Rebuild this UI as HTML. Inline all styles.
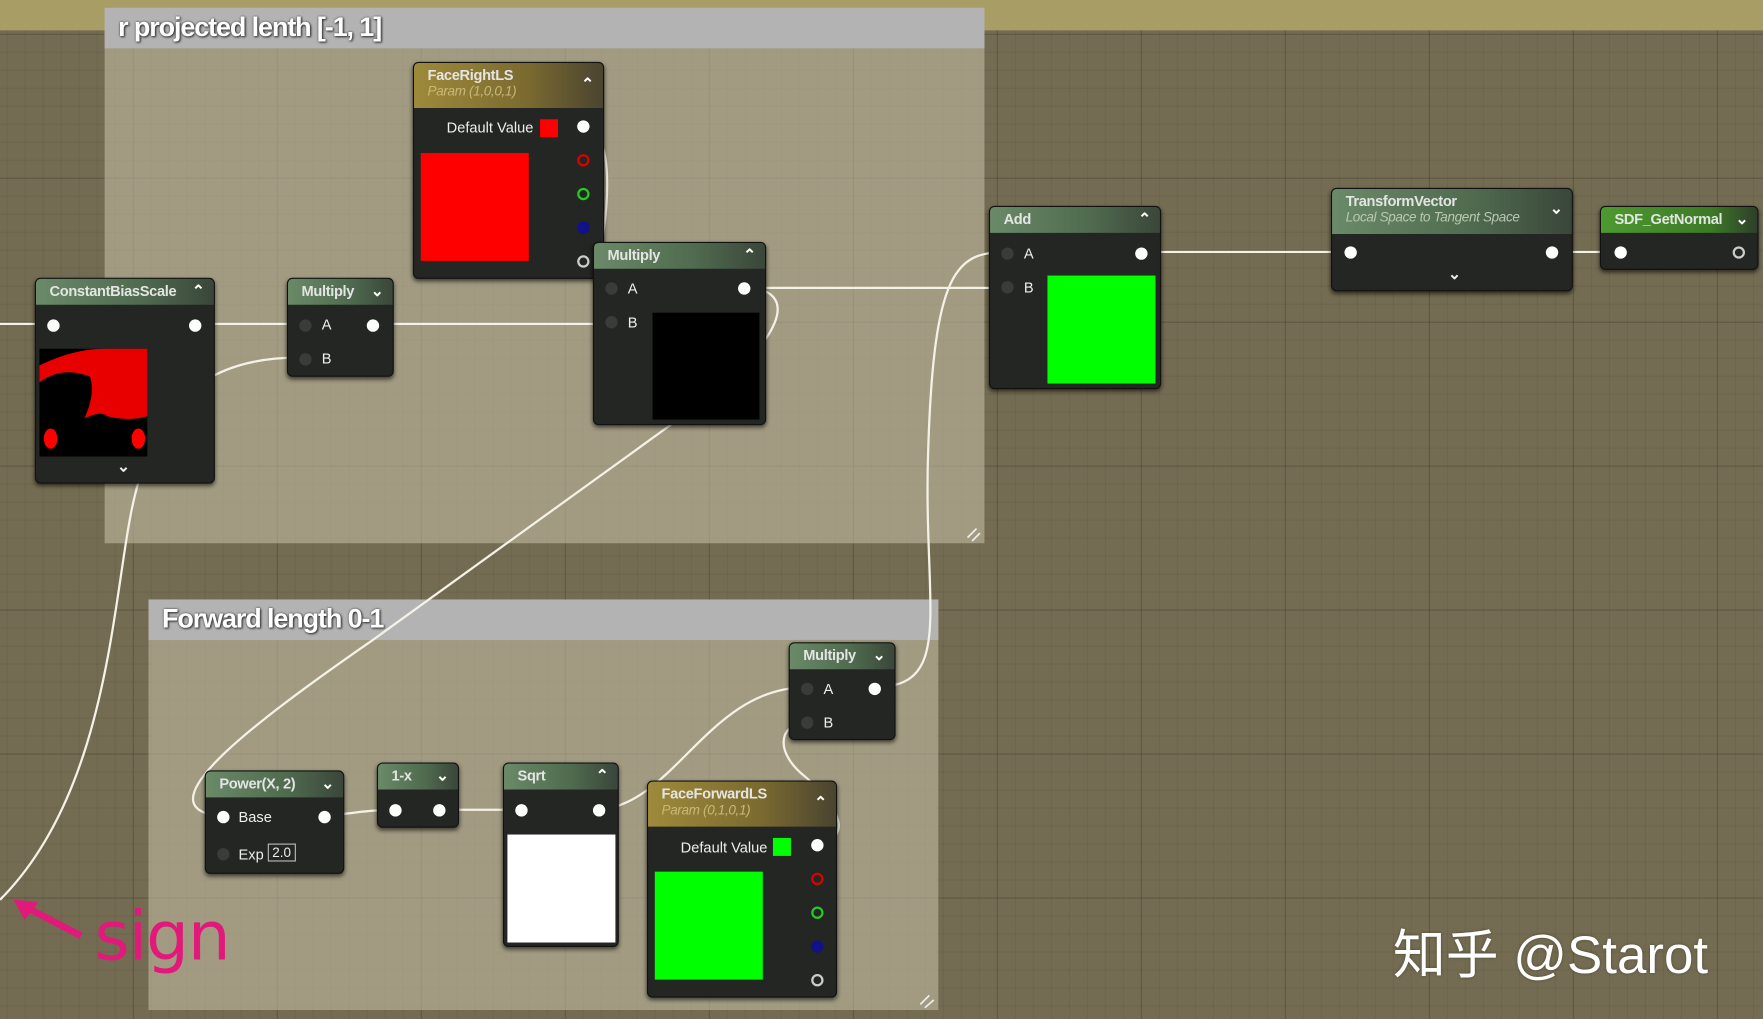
<!DOCTYPE html>
<html><head><meta charset="utf-8"><style>
*{margin:0;padding:0;box-sizing:border-box}
html,body{width:1763px;height:1019px;overflow:hidden;background:#6f6750}
#s{position:absolute;left:0;top:0;width:1567px;height:906px;transform-origin:0 0;transform:scale(1.12508,1.12472);
font-family:"Liberation Sans",sans-serif;
background-color:#746c52;
background-image:linear-gradient(rgba(0,0,0,.15) 1px,transparent 1px),linear-gradient(90deg,rgba(0,0,0,.15) 1px,transparent 1px),linear-gradient(rgba(0,0,0,.07) 1px,transparent 1px),linear-gradient(90deg,rgba(0,0,0,.07) 1px,transparent 1px);
background-size:128px 128px,128px 128px,16px 16px,16px 16px;background-position:-10px 30px}
.top{position:absolute;left:0;top:0;width:1567px;height:27px;background:#a99d66}
.cm{position:absolute;background:rgba(200,195,170,.55)}
.cm .h{height:36px;background:#b3b3b3;color:#fff;font-size:24px;font-weight:bold;padding:4px 12px;text-shadow:1px 1px 2px #333,0 0 2px #444;letter-spacing:-1px}
.n{position:absolute;background:#242623;border-radius:5px;box-shadow:0 2px 4px rgba(0,0,0,.6);border:1px solid #111;color:#ddd;font-size:13px}
.n .hd{height:23px;border-radius:4px 4px 0 0;background:linear-gradient(90deg,#6a8a68,#4f6a4e 60%,#3a463a);color:#e4e4e4;padding:3px 12px;font-size:13px;font-weight:bold;position:relative;letter-spacing:-.3px}
.n .hd.g{background:linear-gradient(90deg,#9e8a3a,#7b6a30 60%,#4a4430);height:40px}
.n .hd.b{background:linear-gradient(90deg,#4d9a30,#3c7a26 70%,#2e3e2a)}
.hd i{display:block;font-size:12px;color:#c9b878;font-style:italic;font-weight:normal}
.hd .c{position:absolute;right:8px;top:2px;font-size:14px;color:#fff;font-weight:bold}
.p{position:absolute;width:11px;height:11px;border-radius:50%;background:#fff}
.p.d{background:#3a3c39}
.p.o{background:none;border:2px solid #ccc}
.lb{position:absolute;font-size:13px;color:#eee}
.sq{position:absolute}
</style></head><body><div id="s">
<div class="top"></div>
<div class="cm" style="left:93px;top:7px;width:782px;height:476px"><div class="h">r projected lenth [-1, 1]</div></div>
<div class="cm" style="left:132px;top:533px;width:702px;height:365px"><div class="h">Forward length 0-1</div></div>

<svg width="1567" height="906" style="position:absolute;left:0;top:0" fill="none" stroke="#f4f1e6" stroke-width="2">
<path d="M0,288 H40 M185,288 H265 M340,288 H540 M665,256 H895 M1014,224 H1195 M1380,224 H1440"/>
<path d="M265,318 C180,318 140,360 120,440 C100,520 100,700 0,800"/>
<path d="M517,112 C550,112 540,200 530,240 C528,250 535,256 543,256"/>
<path d="M662,256 C710,256 705,300 600,375 L330,570 C200,660 130,720 198,726"/>
<path d="M777,611 C850,611 820,540 825,400 C830,240 850,224 895,224"/>
<path d="M288,726 C320,722 330,720 352,720 M390,720 H463 M532,720 C600,715 630,611 717,611"/>
<path d="M726,751 C760,745 745,715 715,690 C690,670 690,645 717,641"/>
<path d="M868,470 L860,478 M871,474 L864,481 M826,885 L818,893 M830,889 L822,896" stroke="#eee" stroke-width="1.5"/>
</svg>

<div class="n" style="left:31px;top:247px;width:160px;height:183px"><div class="hd">ConstantBiasScale<span class="c">⌃</span></div>
<div class="p" style="left:10px;top:36px"></div><div class="p" style="left:136px;top:36px"></div>
<svg class="sq" style="left:3px;top:62px" width="96" height="96"><rect width="96" height="96" fill="#000"/><path d="M0,15 Q30,0 60,0 H96 V60 Q80,65 60,60 Q55,55 40,62 Q50,40 45,25 Q20,15 0,30Z" fill="#e80000"/><ellipse cx="10" cy="80" rx="6" ry="9" fill="#f00"/><ellipse cx="88" cy="80" rx="6" ry="9" fill="#f00"/></svg>
<div class="lb" style="left:72px;top:158px;font-size:14px;font-weight:bold">⌄</div></div>

<div class="n" style="left:255px;top:247px;width:95px;height:88px"><div class="hd">Multiply<span class="c">⌄</span></div>
<div class="p d" style="left:10px;top:36px"></div><div class="lb" style="left:30px;top:33px">A</div><div class="p" style="left:70px;top:36px"></div>
<div class="p d" style="left:10px;top:66px"></div><div class="lb" style="left:30px;top:63px">B</div></div>

<div class="n" style="left:367px;top:55px;width:170px;height:193px"><div class="hd g">FaceRightLS<i>Param (1,0,0,1)</i><span class="c" style="top:10px">⌃</span></div>
<div class="lb" style="left:29px;top:50px">Default Value</div><div class="sq" style="left:112px;top:50px;width:16px;height:16px;background:#f00"></div>
<div class="sq" style="left:6px;top:80px;width:96px;height:96px;background:#f00"></div>
<div class="p" style="left:145px;top:51px"></div><div class="p o" style="left:145px;top:81px;border-color:#d00"></div><div class="p o" style="left:145px;top:111px;border-color:#2c2"></div><div class="p" style="left:145px;top:141px;background:#118"></div><div class="p o" style="left:145px;top:171px"></div></div>

<div class="n" style="left:527px;top:215px;width:154px;height:163px"><div class="hd">Multiply<span class="c">⌃</span></div>
<div class="p d" style="left:10px;top:35px"></div><div class="lb" style="left:30px;top:33px">A</div><div class="p" style="left:128px;top:35px"></div>
<div class="p d" style="left:10px;top:65px"></div><div class="lb" style="left:30px;top:63px">B</div>
<div class="sq" style="left:52px;top:62px;width:95px;height:95px;background:#000"></div></div>

<div class="n" style="left:879px;top:183px;width:153px;height:163px"><div class="hd">Add<span class="c">⌃</span></div>
<div class="p d" style="left:10px;top:36px"></div><div class="lb" style="left:30px;top:34px">A</div><div class="p" style="left:129px;top:36px"></div>
<div class="p d" style="left:10px;top:66px"></div><div class="lb" style="left:30px;top:64px">B</div>
<div class="sq" style="left:51px;top:61px;width:96px;height:96px;background:#0f0"></div></div>

<div class="n" style="left:1183px;top:167px;width:215px;height:92px"><div class="hd" style="height:40px">TransformVector<i style="color:#b8c8b0">Local Space to Tangent Space</i><span class="c" style="top:9px">⌄</span></div>
<div class="p" style="left:11px;top:51px"></div><div class="p" style="left:190px;top:51px"></div><div class="lb" style="left:103px;top:67px;font-size:14px;font-weight:bold">⌄</div></div>

<div class="n" style="left:1422px;top:183px;width:141px;height:57px"><div class="hd b">SDF_GetNormal<span class="c">⌄</span></div>
<div class="p" style="left:12px;top:35px"></div><div class="p o" style="left:117px;top:35px"></div></div>

<div class="n" style="left:701px;top:571px;width:95px;height:87px"><div class="hd">Multiply<span class="c">⌄</span></div>
<div class="p d" style="left:10px;top:35px"></div><div class="lb" style="left:30px;top:33px">A</div><div class="p" style="left:70px;top:35px"></div>
<div class="p d" style="left:10px;top:65px"></div><div class="lb" style="left:30px;top:63px">B</div></div>

<div class="n" style="left:182px;top:685px;width:124px;height:92px"><div class="hd">Power(X, 2)<span class="c">⌄</span></div>
<div class="p" style="left:10px;top:35px"></div><div class="lb" style="left:29px;top:33px">Base</div><div class="p" style="left:100px;top:35px"></div>
<div class="p d" style="left:10px;top:68px"></div><div class="lb" style="left:29px;top:66px">Exp</div><div class="lb" style="left:55px;top:64px;border:1px solid #bbb;padding:0 3px;font-size:12px">2.0</div></div>

<div class="n" style="left:335px;top:678px;width:73px;height:58px"><div class="hd">1-x<span class="c">⌄</span></div>
<div class="p" style="left:10px;top:36px"></div><div class="p" style="left:49px;top:36px"></div></div>

<div class="n" style="left:447px;top:678px;width:103px;height:164px"><div class="hd">Sqrt<span class="c">⌃</span></div>
<div class="p" style="left:10px;top:36px"></div><div class="p" style="left:79px;top:36px"></div>
<div class="sq" style="left:3px;top:63px;width:96px;height:96px;background:#fff"></div></div>

<div class="n" style="left:575px;top:694px;width:169px;height:193px"><div class="hd g">FaceForwardLS<i>Param (0,1,0,1)</i><span class="c" style="top:10px">⌃</span></div>
<div class="lb" style="left:29px;top:51px">Default Value</div><div class="sq" style="left:111px;top:50px;width:16px;height:16px;background:#0f0"></div>
<div class="sq" style="left:6px;top:80px;width:96px;height:96px;background:#0f0"></div>
<div class="p" style="left:145px;top:51px"></div><div class="p o" style="left:145px;top:81px;border-color:#d00"></div><div class="p o" style="left:145px;top:111px;border-color:#2c2"></div><div class="p" style="left:145px;top:141px;background:#118"></div><div class="p o" style="left:145px;top:171px"></div></div>

<svg width="80" height="50" style="position:absolute;left:8px;top:796px"><path d="M64,36 L12,9" stroke="#e0197a" stroke-width="6"/><path d="M4,4 L26,6 L14,22Z" fill="#e0197a"/></svg>
<div style="position:absolute;left:84px;top:798px;font-size:60px;color:#e0197a;font-family:'DejaVu Sans',sans-serif;letter-spacing:-1px">sign</div>
<div style="position:absolute;left:1238px;top:810px;font-size:47px;color:#fff;font-family:'Liberation Sans','Noto Sans CJK SC',sans-serif;text-shadow:0 0 3px rgba(0,0,0,.3)">知乎 @Starot</div>
</div></body></html>
